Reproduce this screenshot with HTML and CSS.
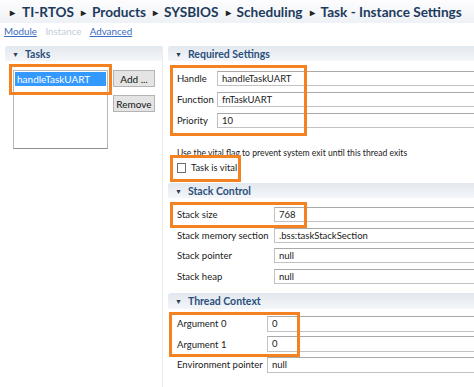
FILE: index.html
```html
<!DOCTYPE html>
<html lang="en">
<head>
    <meta charset="UTF-8">
    <title>Task - Instance Settings</title>
    <link rel="stylesheet" href="styles.css">
</head>
<body>
    <div class="page">
        <!-- Breadcrumb title -->
        <div class="crumbs">
            <span class="sep">&#9656;</span><span>TI-RTOS</span>
            <span class="sep">&#9656;</span><span>Products</span>
            <span class="sep">&#9656;</span><span>SYSBIOS</span>
            <span class="sep">&#9656;</span><span>Scheduling</span>
            <span class="sep">&#9656;</span><span>Task - Instance Settings</span>
        </div>
        <div class="tabs">
            <a href="#">Module</a>
            <span class="off">Instance</span>
            <a href="#">Advanced</a>
        </div>

        <div class="main">
            <!-- Instance list -->
            <div class="left">
                <div class="head"><span class="tri">&#9660;</span>Tasks</div>
                <div class="list-row">
                    <div class="list">
                        <div class="item sel">handleTaskUART</div>
                    </div>
                    <div class="buttons">
                        <button>Add ...</button>
                        <button>Remove</button>
                    </div>
                </div>
            </div>

            <!-- Settings -->
            <div class="right">
                <div class="head"><span class="tri">&#9660;</span>Required Settings</div>
                <div class="fields req">
                    <label>Handle</label><div class="field">handleTaskUART</div>
                    <label>Function</label><div class="field">fnTaskUART</div>
                    <label>Priority</label><div class="field">10</div>
                </div>
                <p class="note">Use the vital flag to prevent system exit until this thread exits</p>
                <div class="check"><span class="box"></span>Task is vital</div>

                <div class="head"><span class="tri">&#9660;</span>Stack Control</div>
                <div class="fields stack">
                    <label>Stack size</label><div class="field">768</div>
                    <label>Stack memory section</label><div class="field">.bss:taskStackSection</div>
                    <label>Stack pointer</label><div class="field">null</div>
                    <label>Stack heap</label><div class="field">null</div>
                </div>

                <div class="head tall"><span class="tri">&#9660;</span>Thread Context</div>
                <div class="fields thread">
                    <label>Argument 0</label><div class="field">0</div>
                    <label>Argument 1</label><div class="field">0</div>
                    <label>Environment pointer</label><div class="field">null</div>
                </div>
            </div>
        </div>

        <!-- Orange callouts drawn over the form -->
        <div class="mark m-list"></div>
        <div class="mark m-req"></div>
        <div class="mark m-vital"></div>
        <div class="mark m-stack"></div>
        <div class="mark m-args"></div>
    </div>
</body>
</html>
```

FILE: styles.css
```css
/* Page */
body {
    margin: 0;
    background: #fff;
    font-family: 'Lato', 'Liberation Sans', sans-serif;
    font-size: 9.5px;
    color: #1a1a1a;
}

.page {
    position: relative;
    width: 474px;
    height: 387px;
    overflow: hidden;
}

/* Breadcrumb bar */
.crumbs {
    height: 23px;
    display: flex;
    align-items: center;
    padding-left: 10px;
    background: linear-gradient(#fdfdfe, #eef1f5);
    font-size: 13.6px;
    font-weight: bold;
    color: #1d3a5c;
    white-space: nowrap;
}
.crumbs .sep {
    font-size: 10px;
    color: #222;
    margin: 0 6px 0 7px;
}
.crumbs .sep:first-child {
    margin-left: 0;
    margin-right: 7px;
}

/* Module / Instance / Advanced links */
.tabs {
    height: 15px;
    padding: 2px 0 0 4px;
    font-size: 9.8px;
}
.tabs a {
    color: #3a6cc0;
    margin-right: 6px;
}
.tabs .off {
    color: #c3cbd8;
    margin-right: 6px;
}

.main {
    display: flex;
    padding-top: 6px;
}

/* Section headers */
.head {
    height: 15px;
    display: flex;
    align-items: center;
    padding-left: 7px;
    background: linear-gradient(#e2e8ef, #f4f6f9);
    border-top-left-radius: 3px;
    font-weight: bold;
    font-size: 10.5px;
    color: #2b4f7c;
}
.head.tall {
    height: 16px;
}
.tri {
    font-size: 7px;
    color: #2b3e55;
    margin-right: 6px;
}

/* Left column */
.left {
    width: 157px;
    margin-left: 5px;
    height: 360px;
    border-right: 1px solid #ececec;
}
.list-row {
    display: flex;
    padding: 9px 0 0 8px;
}
.list {
    width: 95px;
    height: 79px;
    box-sizing: border-box;
    border: 1px solid #b8b8b8;
    border-bottom-color: #8d8d8d;
    padding: 1px;
}
.item {
    height: 14px;
    line-height: 14px;
    padding-left: 2px;
    font-size: 10px;
}
.item.sel {
    background: #3399ff;
    color: #fff;
}
.buttons {
    display: flex;
    flex-direction: column;
    gap: 8px;
    margin-left: 5px;
}
button {
    width: 42px;
    height: 17px;
    padding: 0;
    font-family: inherit;
    font-size: 10px;
    color: #111;
    background: #e4e4e4;
    border: 1px solid #b4b4b4;
}

/* Right column */
.right {
    flex: 1;
    margin-left: 5px;
}
.fields {
    display: grid;
    align-items: center;
    row-gap: 6px;
    padding-left: 9px;
}
.fields label {
    white-space: nowrap;
}
.req {
    grid-template-columns: 40px 1fr;
    padding-top: 10px;
}
.stack {
    grid-template-columns: 97px 1fr;
    padding-top: 9px;
    row-gap: 5.5px;
    margin-bottom: 9px;
}
.thread {
    grid-template-columns: 90px 1fr;
    padding-top: 7px;
    row-gap: 4.5px;
}
.field {
    height: 15px;
    box-sizing: border-box;
    line-height: 13px;
    padding-left: 4px;
    border: 1px solid #c2c2c2;
    border-top-color: #a9a9a9;
    margin-right: -4px;
    white-space: nowrap;
}
.thread .field {
    height: 16px;
    line-height: 14px;
}

.note {
    margin: 20px 0 0 9px;
    font-size: 8.6px;
    white-space: nowrap;
}
.check {
    display: flex;
    align-items: center;
    margin: 4px 0 10px 9px;
    font-size: 9.4px;
}
.check .box {
    width: 7px;
    height: 8px;
    border: 1px solid #6f6f6f;
    background: #fff;
    margin-right: 5px;
}

/* Orange annotation boxes */
.mark {
    position: absolute;
    box-sizing: border-box;
    border: 3px solid #f58220;
}
.m-list  { left: 9px;   top: 64px;  width: 103px; height: 31px; }
.m-req   { left: 170px; top: 65px;  width: 137px; height: 71px; }
.m-vital { left: 170px; top: 155px; width: 71px;  height: 27px; }
.m-stack { left: 170px; top: 202px; width: 137px; height: 26px; }
.m-args  { left: 169px; top: 312px; width: 131px; height: 45px; }
```
